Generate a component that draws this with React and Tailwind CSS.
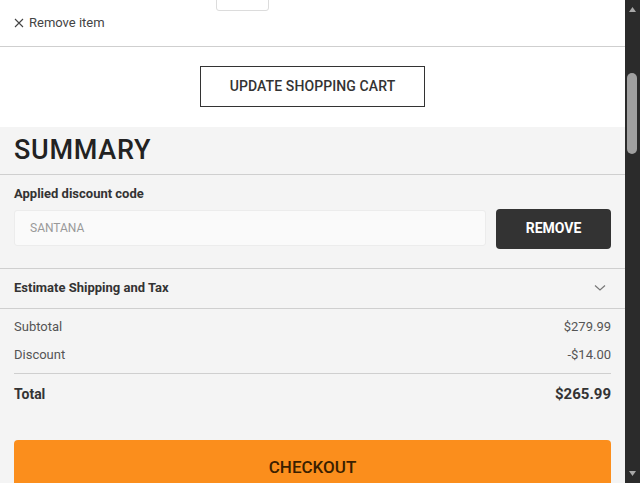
import React from "react";

const font = { fontFamily: "Roboto, 'Liberation Sans', sans-serif" };

export default function App() {
  return (
    <div className="flex h-[483px] w-[640px] overflow-hidden" style={font}>
      <div className="flex w-[625px] flex-col">
        <div className="bg-white">
          <div className="relative h-[47px] border-b border-[#cfcfcf]">
            <div className="absolute left-[216px] top-[-4px] h-[15px] w-[53px] rounded-b-[3px] border border-[#dcdcdc] bg-white" />
            <div className="flex items-center gap-[5px] pl-[14px] pt-[13px] text-[13px] text-[#444]">
              <svg width="10" height="10" viewBox="0 0 10 10" className="mt-[1px]">
                <path d="M1 1L9 9M9 1L1 9" stroke="#444" strokeWidth="1.1" />
              </svg>
              <span>Remove item</span>
            </div>
          </div>
          <div className="flex justify-center pb-[20px] pt-[19px]">
            <button className="h-[41px] w-[225px] border-[1.5px] border-[#333] text-[14px] font-medium tracking-[0.1px] text-[#333]">
              UPDATE SHOPPING CART
            </button>
          </div>
        </div>
        <div className="flex-1 bg-[#f4f4f4]">
          <div className="flex h-[48px] items-center border-b border-[#cfcfcf] pl-[14px]">
            <h2 className="text-[27px] font-medium leading-none tracking-[0.7px] text-[#222]">SUMMARY</h2>
          </div>
          <div className="border-b border-[#cfcfcf] px-[14px] pb-[19px] pt-[9px]">
            <div className="mb-[6px] text-[13px] font-bold text-[#333]">Applied discount code</div>
            <div className="flex gap-[10px]">
              <div className="flex h-[36px] flex-1 items-center rounded-[3px] border border-[#ececec] bg-[#fafafa] pl-[15px] text-[12px] text-[#999]">
                SANTANA
              </div>
              <button className="mt-[-1px] h-[40px] w-[115px] rounded-[4px] bg-[#333] text-[14px] font-bold text-white">
                REMOVE
              </button>
            </div>
          </div>
          <div className="flex h-[40px] items-center justify-between border-b border-[#cfcfcf] pl-[14px] pr-[19px]">
            <span className="text-[13px] font-bold text-[#333]">Estimate Shipping and Tax</span>
            <svg width="12" height="8" viewBox="0 0 12 8">
              <path d="M1 1.5L6 6L11 1.5" stroke="#777" strokeWidth="1.2" fill="none" />
            </svg>
          </div>
          <div className="px-[14px] pt-[8px]">
            <div className="flex h-[20px] items-center justify-between text-[13px] text-[#555]">
              <span>Subtotal</span>
              <span>$279.99</span>
            </div>
            <div className="mt-[8px] flex h-[20px] items-center justify-between text-[13px] text-[#555]">
              <span>Discount</span>
              <span>-$14.00</span>
            </div>
            <div className="mt-[8px] border-t border-[#cfcfcf]" />
            <div className="mt-[11px] flex h-[20px] items-center justify-between text-[#333]">
              <span className="text-[14px] font-bold">Total</span>
              <span className="text-[15px] font-bold">$265.99</span>
            </div>
            <button className="mt-[35px] h-[54px] w-full rounded-t-[4px] bg-[#fb8e1c] pt-[2px] text-[17px] font-medium text-[#3a1f00]">
              CHECKOUT
            </button>
          </div>
        </div>
      </div>
      <div className="relative w-[15px] bg-[#2b2b2b]">
        <svg className="absolute left-[4px] top-[7px]" width="7" height="5" viewBox="0 0 7 5">
          <path d="M3.5 0L7 5H0Z" fill="#a8a8a8" />
        </svg>
        <div className="absolute left-[2px] top-[73px] h-[81px] w-[10px] rounded-[5px] bg-[#a0a0a0]" />
        <svg className="absolute bottom-[7px] left-[4px]" width="7" height="5" viewBox="0 0 7 5">
          <path d="M0 0H7L3.5 5Z" fill="#a8a8a8" />
        </svg>
      </div>
    </div>
  );
}
